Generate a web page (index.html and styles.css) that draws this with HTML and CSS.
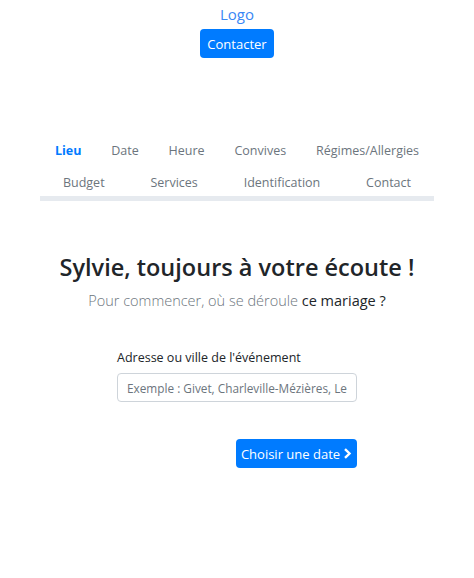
FILE: index.html
```html
<!DOCTYPE html>
<html lang="fr">

<head>
    <meta charset="UTF-8">
    <meta name="viewport" content="width=device-width, initial-scale=1.0">
    <title>Votre mariage</title>
    <link rel="stylesheet" href="styles.css">
</head>

<body>
    <header class="entete">
        <a class="logo" href="#">Logo</a>
        <button class="btn-bleu btn-contact">Contacter</button>
    </header>

    <nav class="etapes">
        <ul class="etapes-ligne">
            <li><a class="actif" href="#">Lieu</a></li>
            <li><a href="#">Date</a></li>
            <li><a href="#">Heure</a></li>
            <li><a href="#">Convives</a></li>
            <li><a href="#">Régimes/Allergies</a></li>
        </ul>
        <ul class="etapes-ligne">
            <li><a href="#">Budget</a></li>
            <li><a href="#">Services</a></li>
            <li><a href="#">Identification</a></li>
            <li><a href="#">Contact</a></li>
        </ul>
        <div class="barre"></div>
    </nav>

    <main class="etape-lieu">
        <h1>Sylvie, toujours à votre écoute !</h1>
        <p class="sous-titre">Pour commencer, où se déroule <span>ce mariage ?</span></p>

        <form class="formulaire">
            <label for="lieu">Adresse ou ville de l'événement</label>
            <input id="lieu" type="text" placeholder="Exemple : Givet, Charleville-Mézières, Les Mazures...">
            <div class="actions">
                <button type="button" class="btn-bleu">Choisir une date
                    <svg width="9" height="11" viewBox="0 0 9 11"><path d="M2 1.2 L6.5 5.5 L2 9.8" fill="none" stroke="#fff" stroke-width="2.4"/></svg>
                </button>
            </div>
        </form>
    </main>
</body>

</html>
```

FILE: styles.css
```css
body {
    font-family: "Open Sans", "Noto Sans", sans-serif;
    color: #212529;
    background-color: #fff;
    margin: 0;
}

.entete {
    display: flex;
    flex-direction: column;
    align-items: center;
    padding-top: 4px;
}

.logo {
    color: #3a87f5;
    text-decoration: none;
    font-size: 15px;
    line-height: 21px;
}

.btn-bleu {
    background-color: #007bff;
    color: #fff;
    border: none;
    border-radius: 4px;
    font-family: inherit;
    font-size: 13px;
    cursor: pointer;
}

.btn-contact {
    margin-top: 4px;
    width: 74px;
    height: 29px;
    padding: 0;
}

.etapes {
    margin: 75px 40px 0;
}

.etapes-ligne {
    display: flex;
    justify-content: space-around;
    list-style: none;
    margin: 0;
    padding: 0;
    height: 32px;
    align-items: center;
}

.etapes-ligne a {
    color: #6c757d;
    text-decoration: none;
    font-size: 12.5px;
}

.etapes-ligne a.actif {
    color: #007bff;
    font-weight: bold;
}

.barre {
    height: 5px;
    background-color: #e6eaef;
    margin-top: -1px;
}

.etape-lieu {
    text-align: center;
    padding-top: 50px;
}

h1 {
    font-size: 23.5px;
    font-weight: 600;
    margin: 0;
    line-height: 32px;
}

.sous-titre {
    color: #6c757d;
    font-size: 14.5px;
    font-weight: 300;
    margin: 8px 0 0;
}

.sous-titre span {
    color: #212529;
    font-weight: 400;
}

.formulaire {
    width: 240px;
    margin: 39px auto 0;
    text-align: left;
}

.formulaire label {
    display: block;
    font-size: 12.5px;
    margin-bottom: 7px;
}

.formulaire input {
    box-sizing: border-box;
    width: 240px;
    height: 29px;
    border: 1px solid #ced4da;
    border-radius: 4px;
    padding: 0 9px;
    font-family: inherit;
    font-size: 11.8px;
    color: #495057;
}

.formulaire input::placeholder {
    color: #6c757d;
}

.actions {
    display: flex;
    justify-content: flex-end;
    margin-top: 37px;
}

.actions .btn-bleu {
    height: 29px;
    width: 121px;
    padding: 0;
    display: flex;
    align-items: center;
    justify-content: center;
    gap: 3px;
}
```
